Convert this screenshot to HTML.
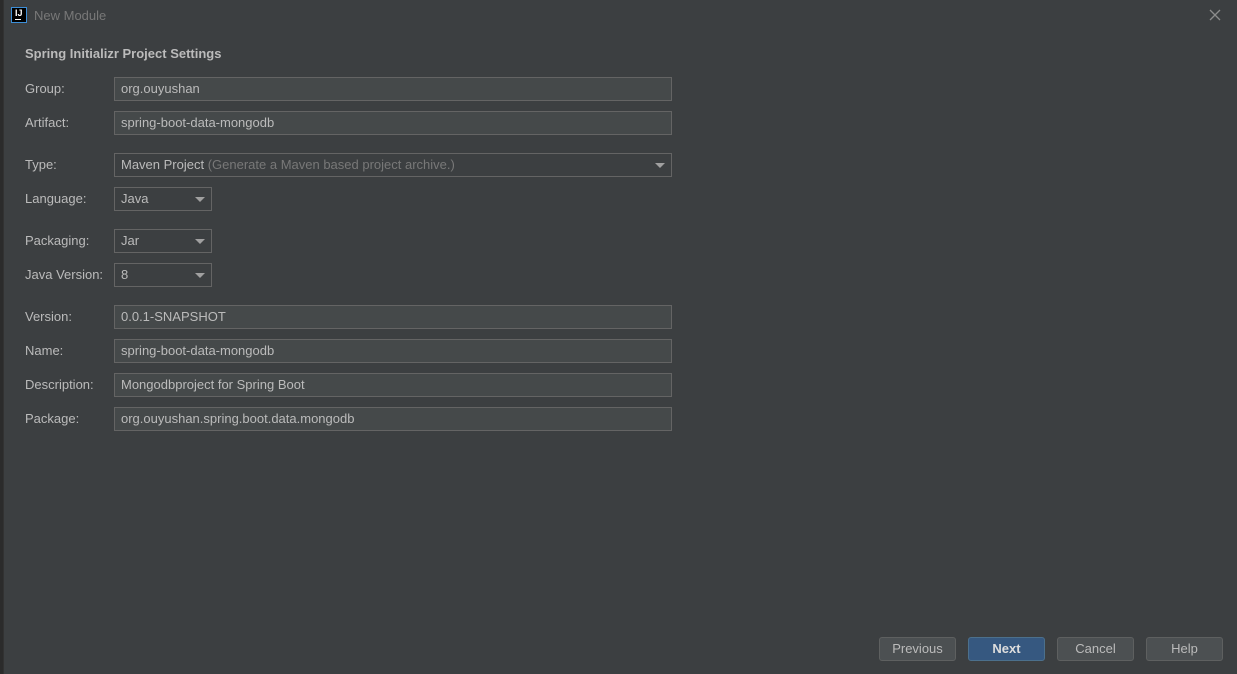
<!DOCTYPE html>
<html><head><style>
*{margin:0;padding:0;box-sizing:border-box}
body{width:1237px;height:674px;background:#2b2b2b;font-family:"Liberation Sans",sans-serif;font-size:13px;color:#bbbbbb;position:relative;overflow:hidden}
.dlg{position:absolute;left:3px;top:0;width:1234px;height:674px;background:#3c3f41;border-left:1px solid #323232}
.t{position:absolute;white-space:nowrap}
.f{position:absolute;left:114px;width:558px;height:24px;background:#45494a;border:1px solid #646464;padding-left:6px;line-height:22px;color:#bbbbbb}
.c{position:absolute;left:114px;width:98px;height:24px;border:1px solid #646464;padding-left:6px;line-height:22px;background:#3c3f41}
.arr{position:absolute;right:6px;top:9px;width:0;height:0;border-left:5px solid transparent;border-right:5px solid transparent;border-top:5px solid #a0a0a0}
.b{position:absolute;top:637px;width:77px;height:24px;border:1px solid #5e6060;border-radius:3px;background:#4c5052;text-align:center;line-height:22px;color:#bbbbbb}
</style></head><body>
<div class="dlg">
<div style="position:absolute;left:7px;top:7px;width:16px;height:16px;background:#000;border:1px solid #3d8fd8"></div>
<div class="t" style="left:11px;top:8px;color:#fff;font-weight:bold;font-size:9px">IJ</div>
<div style="position:absolute;left:11px;top:19px;width:6px;height:1px;background:#fff"></div>
<div class="t" style="left:30px;top:8px;color:#787878">New Module</div>
<svg style="position:absolute;left:1205px;top:9px" width="12" height="12"><path d="M1 1L11 11M11 1L1 11" stroke="#8c8c8c" stroke-width="1.3"/></svg>
<div class="t" style="left:21px;top:46px;font-weight:bold">Spring Initializr Project Settings</div>
</div>
<div class="t" style="left:25px;top:81px">Group:</div><div class="f" style="top:77px">org.ouyushan</div>
<div class="t" style="left:25px;top:115px">Artifact:</div><div class="f" style="top:111px">spring-boot-data-mongodb</div>
<div class="t" style="left:25px;top:157px">Type:</div><div class="f" style="top:153px;background:#3c3f41">Maven Project <span style="color:#787878">(Generate a Maven based project archive.)</span><div class="arr"></div></div>
<div class="t" style="left:25px;top:191px">Language:</div><div class="c" style="top:187px">Java<div class="arr"></div></div>
<div class="t" style="left:25px;top:233px">Packaging:</div><div class="c" style="top:229px">Jar<div class="arr"></div></div>
<div class="t" style="left:25px;top:267px">Java Version:</div><div class="c" style="top:263px">8<div class="arr"></div></div>
<div class="t" style="left:25px;top:309px">Version:</div><div class="f" style="top:305px">0.0.1-SNAPSHOT</div>
<div class="t" style="left:25px;top:343px">Name:</div><div class="f" style="top:339px">spring-boot-data-mongodb</div>
<div class="t" style="left:25px;top:377px">Description:</div><div class="f" style="top:373px">Mongodbproject for Spring Boot</div>
<div class="t" style="left:25px;top:411px">Package:</div><div class="f" style="top:407px">org.ouyushan.spring.boot.data.mongodb</div>
<div class="b" style="left:879px">Previous</div>
<div class="b" style="left:968px;background:#365880;border-color:#4c708c;color:#dddddd;font-weight:bold">Next</div>
<div class="b" style="left:1057px">Cancel</div>
<div class="b" style="left:1146px">Help</div>
</body></html>
